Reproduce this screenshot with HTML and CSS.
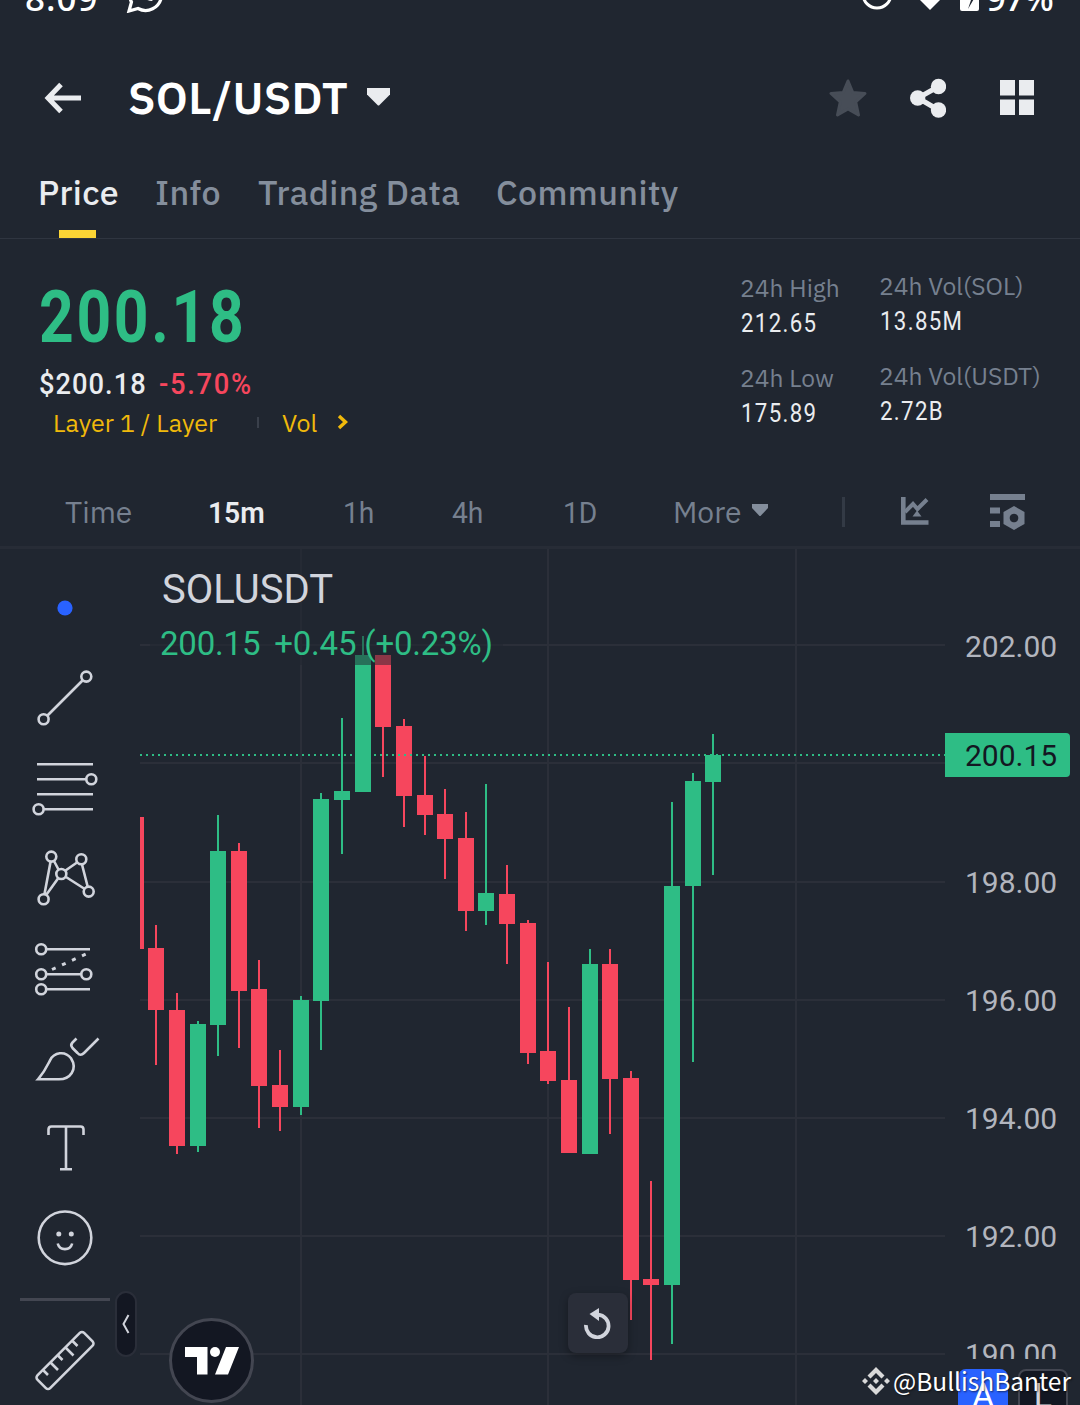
FILE: index.html
```html
<!DOCTYPE html>
<html lang="en">
<head>
  <meta charset="UTF-8" />
  <meta name="viewport" content="width=device-width, initial-scale=1.0" />
  <title>SOL/USDT</title>
  <link rel="stylesheet" href="styles.css">
</head>
<body>
  <div class="status-bar">
    <span class="clock">8:09</span>
    <svg class="whatsapp" width="38" height="38" viewBox="0 0 38 38" fill="none" stroke="#fff" stroke-width="3.2">
      <path d="M3 36 L5.5 27 A16 16 0 1 1 12 33.5 Z" />
      <path d="M12 11c0 8 7 15 14 15l3-4-5-3-3 2c-2-1-4-3-4-5l2-2-2-5z" fill="#fff" stroke="none" />
    </svg>
    <svg class="status-icons" width="120" height="32" viewBox="0 0 120 32">
      <circle cx="17" cy="15" r="14" fill="none" stroke="#fff" stroke-width="3" />
      <path d="M52 13h36L70 31z" fill="#fff" />
      <path d="M100 6h19v24q0 2-2 2h-15q-2 0-2-2z" fill="#fff" />
      <path d="M112 12l-4 9h3l-3 9 7-12h-3z" fill="#202630" />
    </svg>
    <span class="battery">97%</span>
  </div>

  <header class="header">
    <svg width="38" height="32" viewBox="0 0 38 32" fill="none" stroke="#eaecef" stroke-width="5">
      <path d="M17 2.5L4 16l13 13.500M4.500 16H37" />
    </svg>
    <h1>SOL/USDT</h1>
    <svg class="caret" width="24" height="19" viewBox="0 0 24 19"><path d="M0 1h23v6.500L12 18.500h-1L0 7.500z" fill="#eaecef" /></svg>
    <div class="actions">
      <svg width="38" height="40" viewBox="0 0 38 40"><path d="M19 3l4.800 11.500 12.200 1-9.300 8.300L29.500 37 19 31 8.500 37l2.800-13.200L2 15.500l12.200-1z" fill="#474d57" stroke="#474d57" stroke-width="3" stroke-linejoin="round" /></svg>
      <svg width="36" height="40" viewBox="0 0 36 40" fill="#eaecef">
        <path d="M28.500 8.500L8 20l20.500 12" fill="none" stroke="#eaecef" stroke-width="5" />
        <circle cx="28.500" cy="8.500" r="7.700" /><circle cx="7.700" cy="20" r="7.700" /><circle cx="28.500" cy="32" r="7.700" />
      </svg>
      <svg width="34" height="36" viewBox="0 0 34 36" fill="#eaecef"><path d="M0 0h15v15.500H0zM19 0h15v15.500H19zM0 19.500h15V35H0zM19 19.500h15V35H19z" /></svg>
    </div>
  </header>

  <nav class="tabs">
    <a class="active">Price</a>
    <a>Info</a>
    <a>Trading Data</a>
    <a>Community</a>
  </nav>

  <section class="ticker">
    <div class="quote">
      <div class="last">200.18</div>
      <div class="sub"><span class="usd">$200.18</span><span class="down">-5.70%</span></div>
      <div class="tags">
        <span class="tag">Layer 1 / Layer</span>
        <i></i>
        <span>Vol</span>
        <svg width="12" height="16" viewBox="0 0 12 16"><path d="M2 2l6.500 6L2 14" fill="none" stroke="#f0b90b" stroke-width="3.400" /></svg>
      </div>
    </div>
    <div class="stats">
      <dl><dt>24h High</dt><dd>212.65</dd><dt>24h Low</dt><dd>175.89</dd></dl>
      <dl class="vol"><dt>24h Vol(SOL)</dt><dd>13.85M</dd><dt>24h Vol(USDT)</dt><dd>2.72B</dd></dl>
    </div>
  </section>

  <nav class="intervals">
    <span>Time</span>
    <span class="num active">15m</span>
    <span class="num">1h</span>
    <span class="num">4h</span>
    <span class="num">1D</span>
    <span class="more">More <svg width="16" height="12" viewBox="0 0 16 12"><path d="M0 0h16v4L8.500 12h-1L0 4z" fill="#848e9c" /></svg></span>
    <i class="divider"></i>
    <svg width="28" height="29" viewBox="0 0 28 29" fill="none" stroke="#76808f" stroke-width="4.600">
      <path d="M2.300 0v25.500H27.500" /><path d="M4 15l8-8 4.500 5L26 2.500" stroke-width="4" />
      <path d="M11.500 19.500h9L16 13.500z" fill="#76808f" stroke="none" />
    </svg>
    <svg width="35" height="36" viewBox="0 0 35 36" fill="#76808f">
      <path d="M0 0h35v6H0zM0 13.500h10v6H0zM0 27h10v6H0z" />
      <path fill-rule="evenodd" d="M24 12l10.500 6v12L24 36l-10.500-6V18zM24 19.700a4.300 4.300 0 1 0 .01 0z" />
    </svg>
  </nav>

  <main class="chart">
    <aside class="tools">
      <svg width="130" height="856" viewBox="0 549 130 856" fill="none" stroke="#d1d4dc" stroke-width="2.600">
        <circle cx="65" cy="608" r="7.600" fill="#2962ff" stroke="none" />
        <!-- trend line -->
        <g><circle cx="86.300" cy="676.600" r="5" /><circle cx="43.600" cy="719.200" r="5" /><path d="M82.500 680.500L47.500 715.500" /></g>
        <!-- fib retracement -->
        <g><path d="M37 764.300h56M37 779.300h49M37 794.300h56M44 809.300h49" /><circle cx="91.300" cy="779.200" r="5" /><circle cx="38.600" cy="809.200" r="5" /></g>
        <!-- pattern -->
        <g><circle cx="51.300" cy="856.600" r="5" /><circle cx="81.300" cy="859.200" r="5" /><circle cx="61.300" cy="874" r="5" /><circle cx="43.600" cy="899.200" r="5" /><circle cx="88.700" cy="891.600" r="5" />
          <path d="M50.500 862L44.500 894M54 861l4.500 8.500M58 878.500L46.500 894.500M65.500 870.500L77 862.500M82 864.500l5.500 21.500M66 877l18 11.500" /></g>
        <!-- prediction -->
        <g><path d="M47 949.300h43M47 974.300h34M47 989.300h43" /><path d="M52 969.500L87 953.500" stroke-dasharray="4 7" stroke-width="3" /><circle cx="41.200" cy="949.200" r="5" /><circle cx="41.200" cy="974.200" r="5" /><circle cx="86.300" cy="974.200" r="5" /><circle cx="41.200" cy="989.200" r="5" /></g>
        <!-- brush -->
        <g><path d="M38 1079.300c7-8 9-13 12-19 4-8 15-10 21-2 7 11-1 21-12 21zM76.500 1038.500l-4 4q-2.500 2.500 0 5.500l5 5q3 3.500 6.500 0l14.500-14.500" /></g>
        <!-- text -->
        <g><path d="M48.500 1135v-5.500q0-3 3-3h29q3 0 3 3v5.500M66 1127v42M60 1169.300h12" /></g>
        <!-- emoji -->
        <g><circle cx="65" cy="1237.800" r="26.300" /><path d="M57.700 1243.500c2 7.500 12.500 7.500 14.500 0" /><circle cx="58.800" cy="1234" r="2.500" fill="#d1d4dc" stroke="none" /><circle cx="71.300" cy="1234" r="2.500" fill="#d1d4dc" stroke="none" /></g>
        <path d="M20 1299.500h90" stroke="#434651" stroke-width="3" />
        <!-- ruler -->
        <g><rect x="32" y="1351.500" width="66" height="18" rx="3" transform="rotate(-45 65 1360.500)" /><path d="M43.500 1370.500l4.500 4.500M50 1362l8 8M58 1355.500l4.500 4.500M65 1347l8.500 8.500M72.500 1341l5 5" /></g>
      </svg>
    </aside>

    <div class="plot">
      <svg id="candles" width="805" height="856" viewBox="140 549 805 856"></svg>
      <div class="legend">
        <div class="symbol">SOLUSDT</div>
        <div class="change"><span>200.15</span><span>+0.45</span><span>(+0.23%)</span></div>
      </div>
      <button class="reset"><svg width="28" height="32" viewBox="0 0 28 32"><path d="M3 18A11.300 11.300 0 1 0 15 7.700" fill="none" stroke="#d1d4dc" stroke-width="3.800" /><path d="M6.500 7L16 1v13z" fill="#d1d4dc" /></svg></button>
      <div class="tv-logo"><svg width="54" height="28" viewBox="0 0 54 28" fill="#fff"><path d="M0 0h22.500v27.500H12V10H0zM41 0h13L43 27.500H30z" /><circle cx="30" cy="5" r="5" /></svg></div>
    </div>

    <div class="axis">
      <div class="scale">
        <span>202.00</span><span></span><span>198.00</span><span>196.00</span><span>194.00</span><span>192.00</span><span>190.00</span>
      </div>
      <div class="scale-modes"><b class="auto">A</b><b>L</b></div>
      <div class="price-tag">200.15</div>
    </div>

    <div class="collapse"><svg width="8" height="20" viewBox="0 0 8 20"><path d="M6.500 1L1.500 10l5 9" fill="none" stroke="#d1d4dc" stroke-width="2" /></svg></div>
    <div class="watermark">
      <svg width="28" height="28" viewBox="0 0 28 28" fill="#d9d9d9"><path d="M14 0l8.500 8.500-3 3L14 6l-5.500 5.500-3-3zM14 28l8.500-8.500-3-3L14 22l-5.500-5.500-3 3zM0 14l3-3 3 3-3 3zM22 14l3-3 3 3-3 3zM11 14l3-3 3 3-3 3z" /></svg>
      @BullishBanter
    </div>
  </main>

  <script>
    const GREEN = "#2ebd85";
    const RED = "#f6465d";

    // x, high, body top, body bottom, low, up
    const candles = [
      [156, 925, 948, 1010, 1065, 0],
      [177, 993, 1010, 1146, 1154, 0],
      [198, 1021, 1024, 1146, 1152, 1],
      [218, 815, 851, 1025, 1056, 1],
      [239, 843, 851, 991, 1048, 0],
      [259, 960, 989, 1086, 1128, 0],
      [280, 1050, 1085, 1107, 1131, 0],
      [301, 996, 1000, 1107, 1115, 1],
      [321, 793, 799, 1001, 1050, 1],
      [342, 718, 791, 800, 854, 1],
      [363, 636, 655, 792, 792, 1],
      [383, 655, 655, 727, 777, 0],
      [404, 719, 726, 796, 827, 0],
      [425, 756, 795, 815, 835, 0],
      [445, 789, 814, 839, 879, 0],
      [466, 812, 838, 911, 931, 0],
      [486, 784, 893, 911, 925, 1],
      [507, 865, 894, 924, 964, 0],
      [528, 920, 923, 1053, 1064, 0],
      [548, 962, 1051, 1081, 1084, 0],
      [569, 1007, 1080, 1153, 1153, 0],
      [590, 949, 964, 1154, 1154, 1],
      [610, 949, 964, 1079, 1134, 0],
      [631, 1071, 1078, 1280, 1320, 0],
      [651, 1181, 1279, 1285, 1360, 0],
      [672, 802, 886, 1285, 1344, 1],
      [693, 773, 781, 886, 1062, 1],
      [713, 734, 755, 782, 875, 1]
    ];

    let out = "";
    function rect(x, y, w, h, fill) {
      out += `<rect x="${x}" y="${y}" width="${w}" height="${h}" fill="${fill}" />`;
    }

    [644, 762, 881, 999, 1117, 1235, 1353].forEach(y => rect(140, y, 805, 2, "#2b2f39"));
    [300, 547, 795].forEach(x => rect(x, 549, 2, 856, "#2b2f39"));

    rect(140, 817, 4, 132, RED);
    candles.forEach(([x, high, top, bottom, low, up]) => {
      const color = up ? GREEN : RED;
      rect(x - 1, high, 2, low - high, color);
      rect(x - 8, top, 16, bottom - top, color);
    });

    // last price line
    out += `<path d="M140 755H945" stroke="${GREEN}" stroke-width="2" stroke-dasharray="2 4" />`;
    document.getElementById("candles").innerHTML = out;
  </script>
</body>
</html>
```

FILE: styles.css
```css
* {
  box-sizing: border-box;
}
body {
  margin: 0;
  width: 1080px;
  height: 1405px;
  overflow: hidden;
  background: #202630;
  color: #eaecef;
  font-family: "IBM Plex Sans", "Noto Sans", sans-serif;
}
svg {
  display: block;
  flex: none;
}
.status-bar {
  height: 19px;
  display: flex;
  align-items: flex-end;
  padding: 0 25px 7px 25px;
  overflow: hidden;
  color: #fff;
  font: 500 35px/38px "Noto Sans", sans-serif;
}
.clock {
  width: 101px;
  margin-bottom: -5px;
  letter-spacing: 1px;
}
.whatsapp {
  margin-bottom: -1px;
}
.status-icons {
  margin-left: auto;
  margin-bottom: 1px;
}
.battery {
  width: 69px;
  margin-left: 6px;
  margin-bottom: -5px;
  letter-spacing: -1px;
  white-space: nowrap;
}
.header {
  height: 158px;
  display: flex;
  align-items: center;
  padding: 0 46px 1px 44px;
}
.header h1 {
  width: 219px;
  margin: -1px 20px 0 46px;
  color: #fff;
  font-size: 45px;
  font-weight: 600;
  letter-spacing: 0.3px;
  line-height: 50px;
  white-space: nowrap;
}
.header .caret {
  margin-top: -2px;
}
.actions {
  display: flex;
  align-items: center;
  margin-left: auto;
}
.actions svg:nth-child(2) {
  margin: 0 54px 0 43px;
}
.tabs {
  height: 62px;
  display: grid;
  grid-template-columns: 117px 103px 238px 200px;
  padding-left: 38px;
  border-bottom: 1px solid #2f3540;
  color: #848e9c;
  font-size: 34px;
  font-weight: 500;
  letter-spacing: 0.4px;
  line-height: 30px;
  white-space: nowrap;
}
.tabs a {
  display: flex;
  flex-direction: column;
  justify-content: space-between;
}
.tabs .active {
  color: #eaecef;
}
.tabs .active::after {
  content: "";
  width: 37px;
  height: 8px;
  margin-left: 21px;
  background: #fcd535;
}
.ticker {
  height: 238px;
  display: flex;
  justify-content: space-between;
}
.quote {
  padding: 38px 0 0 39px;
}
/* narrow numerals */
.last, .usd, .down, .stats dd {
  transform-origin: 0 50%;
}
.last {
  width: 240px;
  height: 81px;
  color: #2ebd85;
  font: 700 73px/81px Roboto, sans-serif;
  letter-spacing: 3.2px;
  transform: scaleX(0.83);
}
.sub {
  display: flex;
  height: 50px;
  font: 500 30px/52px Roboto, sans-serif;
}
.usd {
  width: 120px;
  letter-spacing: 1.1px;
  transform: scaleX(0.91);
}
.down {
  color: #f6465d;
  letter-spacing: 1.9px;
  transform: scaleX(0.91);
}
.tags {
  display: flex;
  align-items: center;
  height: 28px;
  padding-left: 14px;
  color: #f0b90b;
  font-size: 25px;
}
.tag {
  width: 204px;
}
.tags i {
  width: 2px;
  height: 11px;
  margin-right: 23px;
  background: #3a404b;
}
.tags svg {
  margin-left: 20px;
}
.stats {
  display: grid;
  grid-template-columns: 139px 201px;
  padding-top: 30px;
}
.stats dl {
  margin: 0;
  padding-top: 2px;
}
.stats .vol {
  padding-top: 0;
}
.stats dt {
  color: #76808f;
  font-size: 24.6px;
  line-height: 34px;
  white-space: nowrap;
}
.stats dd {
  margin: 0 0 19px 1px;
  padding-top: 1px;
  font: 400 25px/36px Roboto, sans-serif;
  letter-spacing: 1.5px;
  transform: scaleX(0.89);
}
.intervals {
  height: 72px;
  display: grid;
  grid-template-columns: 143px 135px 109px 111px 110px 169px 59px 89px 35px;
  align-items: center;
  padding-left: 65px;
  border-bottom: 3px solid #272c36;
  color: #76808f;
  font-size: 30px;
}
.intervals .num {
  padding-top: 2px;
  font-family: Roboto, sans-serif;
  transform: scaleX(0.94);
  transform-origin: 0 50%;
}
.intervals .active {
  color: #eaecef;
  font-weight: 600;
}
.more {
  display: flex;
  align-items: center;
  gap: 10px;
}
.more svg {
  margin-top: -4px;
}
.divider {
  width: 3px;
  height: 30px;
  background: #333a45;
}
.chart {
  position: relative;
  height: 856px;
  display: grid;
  grid-template-columns: 140px 805px 135px;
  font-family: Roboto, sans-serif;
}
.plot {
  position: relative;
}
/* sits over the candles, dims what is under it */
.legend {
  position: absolute;
  top: 0;
  left: 10px;
  height: 116px;
  padding: 17px 10px 0 12px;
  background: rgba(32, 38, 48, 0.5);
}
.symbol {
  color: #d1d4dc;
  font-size: 40px;
  line-height: 48px;
}
.change {
  display: flex;
  margin-left: -2px;
  color: #2ebd85;
  font-size: 33px;
  letter-spacing: -0.2px;
  line-height: 60px;
}
.change span:nth-child(2) {
  margin: 0 8px 0 14px;
}
.reset {
  position: absolute;
  left: 428px;
  top: 744px;
  width: 60px;
  height: 60px;
  padding: 0 0 0 15px;
  border: 0;
  border-radius: 8px;
  background: #2a2e39;
  box-shadow: 0 3px 8px rgba(0, 0, 0, 0.35);
}
.tv-logo {
  position: absolute;
  left: 29px;
  top: 769px;
  width: 85px;
  height: 85px;
  display: flex;
  align-items: center;
  justify-content: center;
  border: 3px solid #434651;
  border-radius: 50%;
  background: #131722;
}
.axis {
  position: relative;
}
.scale {
  height: 810px;
  padding: 39px 0 0 20px;
  overflow: hidden;
  color: #b2b5be;
  font-size: 30px;
}
.scale span {
  display: block;
  height: 118px;
  line-height: 118px;
}
.price-tag {
  position: absolute;
  top: 184px;
  left: 0;
  width: 125px;
  height: 44px;
  padding-left: 20px;
  border-radius: 0 4px 4px 0;
  background: #2ebd85;
  color: #131722;
  font-size: 30px;
  line-height: 46px;
}
.scale-modes {
  display: flex;
  gap: 10px;
  padding: 10px 0 0 13px;
}
.scale-modes b {
  width: 50px;
  height: 50px;
  border: 2px solid #434651;
  border-radius: 8px;
  background: #131722;
  color: #d1d4dc;
  font-size: 34px;
  font-weight: 400;
  line-height: 48px;
  text-align: center;
}
.scale-modes .auto {
  border-color: #2962ff;
  background: #2962ff;
  color: #fff;
}
.collapse {
  position: absolute;
  left: 115px;
  top: 742px;
  width: 22px;
  height: 66px;
  display: flex;
  align-items: center;
  justify-content: center;
  border: 2px solid #2a2e39;
  border-radius: 11px;
  background: #131722;
}
.watermark {
  position: absolute;
  left: 862px;
  top: 814px;
  display: flex;
  align-items: center;
  gap: 3px;
  color: #fff;
  font: 400 24.500px/36px "Noto Sans CJK SC", sans-serif;
  text-shadow: 1px 1px 2px rgba(0, 0, 0, 0.6);
  white-space: nowrap;
}
```
